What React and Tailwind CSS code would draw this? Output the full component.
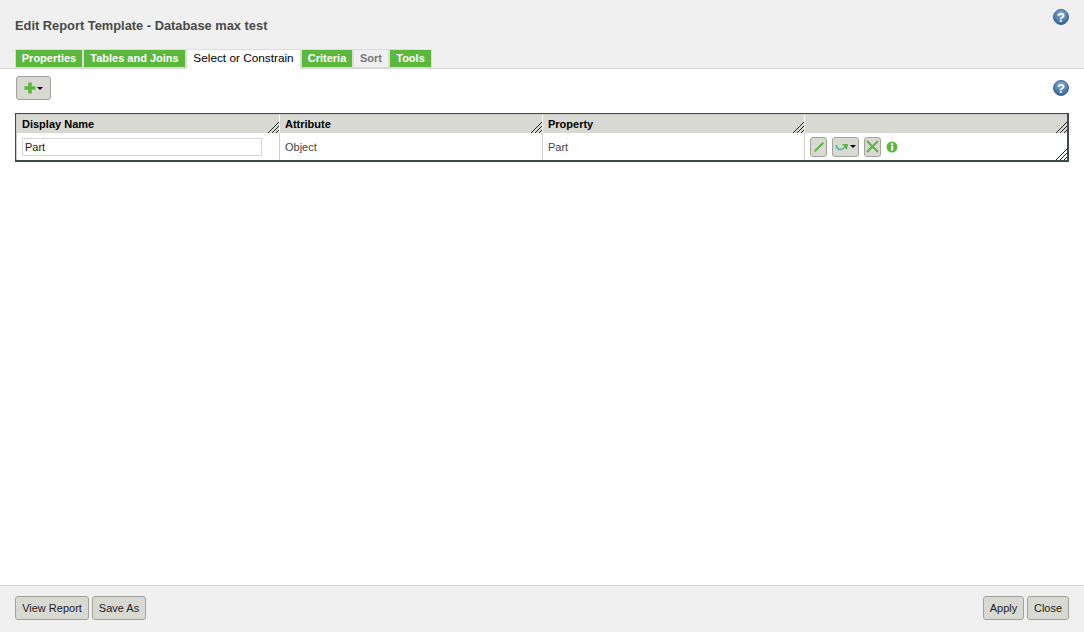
function HelpIcon() {
  return (
    <svg width="16" height="16" viewBox="0 0 16 16">
      <defs>
        <radialGradient id="helpFill" cx="50%" cy="30%" r="70%">
          <stop offset="0%" stopColor="#8fb2d2" />
          <stop offset="100%" stopColor="#2f6195" />
        </radialGradient>
      </defs>
      <circle cx="8" cy="8" r="7.5" fill="url(#helpFill)" stroke="#3d6a97" />
      <text x="8" y="12.5" textAnchor="middle" fontSize="13" fontWeight="700" fill="#fff" fontFamily="Liberation Sans">?</text>
    </svg>
  )
}

function Grip() {
  return (
    <svg width="13" height="13" viewBox="0 0 13 13" className="absolute right-0 bottom-0" stroke="#222" strokeWidth="1">
      <path d="M2 13 L13 2 M6 13 L13 6 M10 13 L13 10" fill="none" />
    </svg>
  )
}

function Caret() {
  return <span className="inline-block w-0 h-0 border-x-[3px] border-x-transparent border-t-[3px] border-t-black" />
}

function Btn({ children, className = "" }) {
  return (
    <button className={`h-[24px] flex items-center justify-center rounded-[3px] border border-[#a3a39d] bg-[#d9d9d4] text-[#222] text-[11px] ${className}`}>
      {children}
    </button>
  )
}

function IconBtn({ children, className = "" }) {
  return (
    <button className={`h-[20px] flex items-center justify-center gap-[1px] rounded-[3px] border border-[#a3a39d] bg-[#d9d9d4] ${className}`}>
      {children}
    </button>
  )
}

const tabs = [
  { label: "Properties", kind: "green", w: "w-[68px]" },
  { label: "Tables and Joins", kind: "green", w: "w-[103px]" },
  { label: "Select or Constrain", kind: "active", w: "w-[115px]" },
  { label: "Criteria", kind: "green", w: "w-[52px]" },
  { label: "Sort", kind: "off", w: "w-[36px]" },
  { label: "Tools", kind: "green", w: "w-[43px]" },
]

const tabStyle = {
  green: "h-[19px] bg-[#5cb83c] text-white font-bold text-[11px] border-[#dcdcd8]",
  active: "h-[20px] pb-[1px] bg-white text-black text-[11.8px] border-[#dcdcd8] border-b-white",
  off: "h-[19px] bg-[#f0f0f0] text-[#777] font-bold text-[11px] border-[#dcdcd8]",
}

export default function App() {
  return (
    <div className="w-[1084px] h-[632px] flex flex-col bg-white text-[11px] text-[#222] font-['Liberation_Sans',Arial,sans-serif] overflow-hidden">
      <div className="h-[69px] shrink-0 bg-[#f0f0f0] border-b border-[#d6d6d6] px-[15px] flex flex-col">
        <div className="flex justify-between pt-[9px] h-[49px]">
          <h1 className="text-[12.85px] font-bold text-[#4a4a4a] pt-[9px] leading-[15px]">Edit Report Template - Database max test</h1>
          <div><HelpIcon /></div>
        </div>
        <div className="flex gap-0 h-[19px]">
          {tabs.map((t) => (
            <div key={t.label} className={`${t.w} ${tabStyle[t.kind]} border-[1px] flex items-center justify-center leading-none shrink-0 relative`}>
              {t.label}
            </div>
          ))}
        </div>
      </div>

      <div className="flex-1 px-[15px] flex flex-col">
        <div className="flex justify-between items-start pt-[7px] pb-[11px] h-[44px]">
          <IconBtn className="w-[35px] !h-[24px] ml-[1px]">
            <svg width="12" height="12" viewBox="0 0 12 12">
              <path d="M4.2 0.5 H7.8 V4.2 H11.5 V7.8 H7.8 V11.5 H4.2 V7.8 H0.5 V4.2 H4.2 Z" fill="#5cb83c" />
            </svg>
            <Caret />
          </IconBtn>
          <div className="pt-[4px]"><HelpIcon /></div>
        </div>

        <div className="border border-[#3f4a4a] border-r-2 border-b-2 pt-[1px] pl-[1px] w-[1054px] h-[49px] bg-[#c9cdcb]">
          <div className="grid grid-cols-[263px_263px_262px_1fr] h-[18px] bg-[#d9d9d4] font-bold text-black leading-[18px]">
            {["Display Name", "Attribute", "Property", ""].map((h) => (
              <div key={h} className="relative pl-[5px] border-r border-white last:border-r-0">
                {h}
                <Grip />
              </div>
            ))}
          </div>
          <div className="grid grid-cols-[263px_263px_262px_1fr] h-[27px] bg-white">
            <div className="border-r border-[#cfcfcf] pl-[5px] pt-[5px]">
              <input readOnly value="Part" className="w-[240px] h-[18px] border border-[#d5d5dc] px-[2px] text-[11px] text-[#222] outline-none" />
            </div>
            <div className="border-r border-[#cfcfcf] pl-[5px] pt-[6px] text-[#444]">Object</div>
            <div className="border-r border-[#cfcfcf] pl-[5px] pt-[6px] text-[#444]">Part</div>
            <div className="relative flex items-center gap-[5px] pl-[5px]">
              <IconBtn className="w-[17px]">
                <svg width="14" height="14" viewBox="0 0 14 14"><path d="M2 12.5 L3 9.5 L10.5 2 L12 3.5 L4.5 11 Z" fill="#5cb83c" /></svg>
              </IconBtn>
              <IconBtn className="w-[27px]">
                <svg width="14" height="10" viewBox="0 0 14 10" fill="none"><path d="M1 3 C2 8 6 9 10 5" stroke="#58b8a0" strokeWidth="1.6" /><path d="M7 2 L13 2 L12 8 Z" fill="#5cb83c" /></svg>
                <Caret />
              </IconBtn>
              <IconBtn className="w-[17px]">
                <svg width="13" height="13" viewBox="0 0 13 13" stroke="#5cb83c" strokeWidth="2.2"><path d="M1 1 L12 12 M12 1 L1 12" /></svg>
              </IconBtn>
              <svg width="12" height="12" viewBox="0 0 12 12">
                <circle cx="6" cy="6" r="5.5" fill="#5cb83c" />
                <rect x="5" y="5" width="2.2" height="4.5" fill="#fff" />
                <rect x="5" y="2.4" width="2.2" height="1.8" fill="#fff" />
              </svg>
              <Grip />
            </div>
          </div>
        </div>
      </div>

      <div className="h-[47px] shrink-0 bg-[#f0f0f0] border-t border-[#d6d6d6] px-[15px] pt-[10px] flex justify-between">
        <div className="flex gap-[3px]">
          <Btn className="w-[74px]">View Report</Btn>
          <Btn className="w-[54px]">Save As</Btn>
        </div>
        <div className="flex gap-[3px]">
          <Btn className="w-[41px]">Apply</Btn>
          <Btn className="w-[42px]">Close</Btn>
        </div>
      </div>
    </div>
  )
}
